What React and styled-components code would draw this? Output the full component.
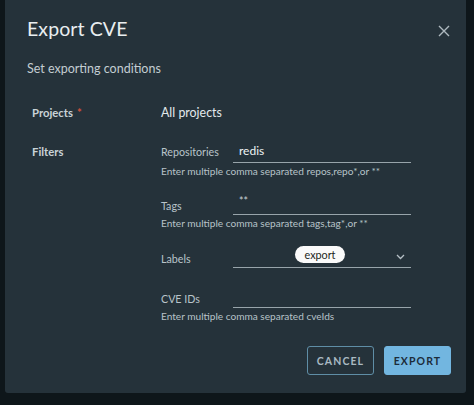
import React from "react";
import styled, { createGlobalStyle } from "styled-components";

const Global = createGlobalStyle`
  html, body { margin: 0; padding: 0; background: #0c1316; }
  body { font-family: Lato, "Open Sans", sans-serif; }
  * { box-sizing: border-box; }
`;

const Page = styled.div`
  width: 474px;
  height: 405px;
  background: #0e161a;
  padding-left: 5px;
  overflow: hidden;
`;

const Modal = styled.div`
  width: 461px;
  height: 393px;
  background: #25323a;
  border-radius: 0 0 3px 3px;
  padding: 15px 15px 18px 22px;
  display: flex;
  flex-direction: column;
`;

const Header = styled.div`
  display: flex;
  align-items: center;
  justify-content: space-between;
  height: 28px;
`;

const Title = styled.h1`
  margin: 0;
  font-size: 19.5px;
  line-height: 28px;
  font-weight: 400;
  color: #e9eef0;
  letter-spacing: 0.1px;
`;

const Close = styled.button`
  background: none;
  border: 0;
  padding: 0;
  width: 14px;
  height: 14px;
  display: flex;
  align-items: center;
  justify-content: center;
  cursor: pointer;
  margin-top: 4px;
`;

const Subtitle = styled.p`
  margin: 17px 0 0;
  font-size: 12.5px;
  line-height: 18px;
  color: #c3cdd2;
`;

const FormGrid = styled.div`
  display: grid;
  grid-template-columns: 129px 1fr;
  margin-top: 26px;
  margin-left: 5px;
  row-gap: 21px;
`;

const Label = styled.div`
  font-size: 11.3px;
  line-height: 18px;
  font-weight: 700;
  color: #c9d2d7;
`;

const Req = styled.span`
  color: #d0503a;
  margin-left: 4px;
`;

const Value = styled.div`
  font-size: 12.4px;
  line-height: 18px;
  color: #e3e9ec;
`;

const Filters = styled.div`
  display: flex;
  flex-direction: column;
  margin-top: -4px;
`;

const Field = styled.div`
  margin-top: ${(p) => p.$gap || 0}px;
`;

const FieldRow = styled.div`
  display: grid;
  grid-template-columns: 72px 178px;
  align-items: end;
`;

const SubLabel = styled.div`
  font-size: 10.7px;
  color: #b9c4ca;
  line-height: 18px;
  margin-bottom: ${(p) => p.$lift || 0}px;
`;

const Input = styled.div`
  height: 24px;
  border-bottom: 1.5px solid #98a4aa;
  display: flex;
  align-items: center;
  padding-left: 6px;
  font-size: 12px;
  color: #eef2f4;
  position: relative;
`;

const Stars = styled.span`
  font-size: 10.5px;
  color: #c7d0d5;
  margin-top: -3px;
`;

const Helper = styled.div`
  font-size: 10.1px;
  line-height: 14px;
  color: #b7c2c8;
  margin-top: 1px;
`;

const SelectBox = styled(Input)`
  justify-content: center;
  padding-left: 0;
`;

const Pill = styled.span`
  background: #fafafa;
  color: #1b1e20;
  border-radius: 9px;
  height: 17px;
  padding: 0 10px;
  font-size: 10.8px;
  line-height: 17px;
  margin-top: -3px;
  margin-left: -4px;
`;

const Chevron = styled.svg`
  position: absolute;
  right: 6px;
  top: 10px;
`;

const Footer = styled.div`
  margin-top: auto;
  display: flex;
  justify-content: flex-end;
  gap: 10px;
`;

const Button = styled.button`
  width: 67px;
  height: 29px;
  border-radius: 3px;
  font-family: Lato, "Open Sans", sans-serif;
  font-weight: 700;
  font-size: 10.5px;
  letter-spacing: 1.1px;
  text-transform: uppercase;
  cursor: pointer;
  padding: 0;
  border: 1px solid ${(p) => (p.$primary ? "#72b6e0" : "#5f8ea6")};
  background: ${(p) => (p.$primary ? "#72b6e0" : "transparent")};
  color: ${(p) => (p.$primary ? "#1c2c3a" : "#a9b9c2")};
`;

export default function App() {
  return (
    <>
      <Global />
      <Page>
        <Modal>
          <Header>
            <Title>Export CVE</Title>
            <Close aria-label="close">
              <svg width="12" height="12" viewBox="0 0 12 12">
                <path d="M1 1 L11 11 M11 1 L1 11" stroke="#aeb9bf" strokeWidth="1.4" fill="none" />
              </svg>
            </Close>
          </Header>
          <Subtitle>Set exporting conditions</Subtitle>
          <FormGrid>
            <Label>
              Projects<Req>*</Req>
            </Label>
            <Value>All projects</Value>
            <Label>Filters</Label>
            <Filters>
              <Field>
                <FieldRow>
                  <SubLabel $lift={2}>Repositories</SubLabel>
                  <Input>redis</Input>
                </FieldRow>
                <Helper>Enter multiple comma separated repos,repo*,or **</Helper>
              </Field>
              <Field $gap={13}>
                <FieldRow>
                  <SubLabel>Tags</SubLabel>
                  <Input>
                    <Stars>**</Stars>
                  </Input>
                </FieldRow>
                <Helper>Enter multiple comma separated tags,tag*,or **</Helper>
              </Field>
              <Field $gap={14}>
                <FieldRow>
                  <SubLabel>Labels</SubLabel>
                  <SelectBox>
                    <Pill>export</Pill>
                    <Chevron width="9" height="6" viewBox="0 0 9 6">
                      <path d="M1 1 L4.5 4.5 L8 1" stroke="#b6c0c6" strokeWidth="1.3" fill="none" />
                    </Chevron>
                  </SelectBox>
                </FieldRow>
              </Field>
              <Field $gap={16}>
                <FieldRow>
                  <SubLabel>CVE IDs</SubLabel>
                  <Input />
                </FieldRow>
                <Helper>Enter multiple comma separated cveIds</Helper>
              </Field>
            </Filters>
          </FormGrid>
          <Footer>
            <Button>Cancel</Button>
            <Button $primary>Export</Button>
          </Footer>
        </Modal>
      </Page>
    </>
  );
}
